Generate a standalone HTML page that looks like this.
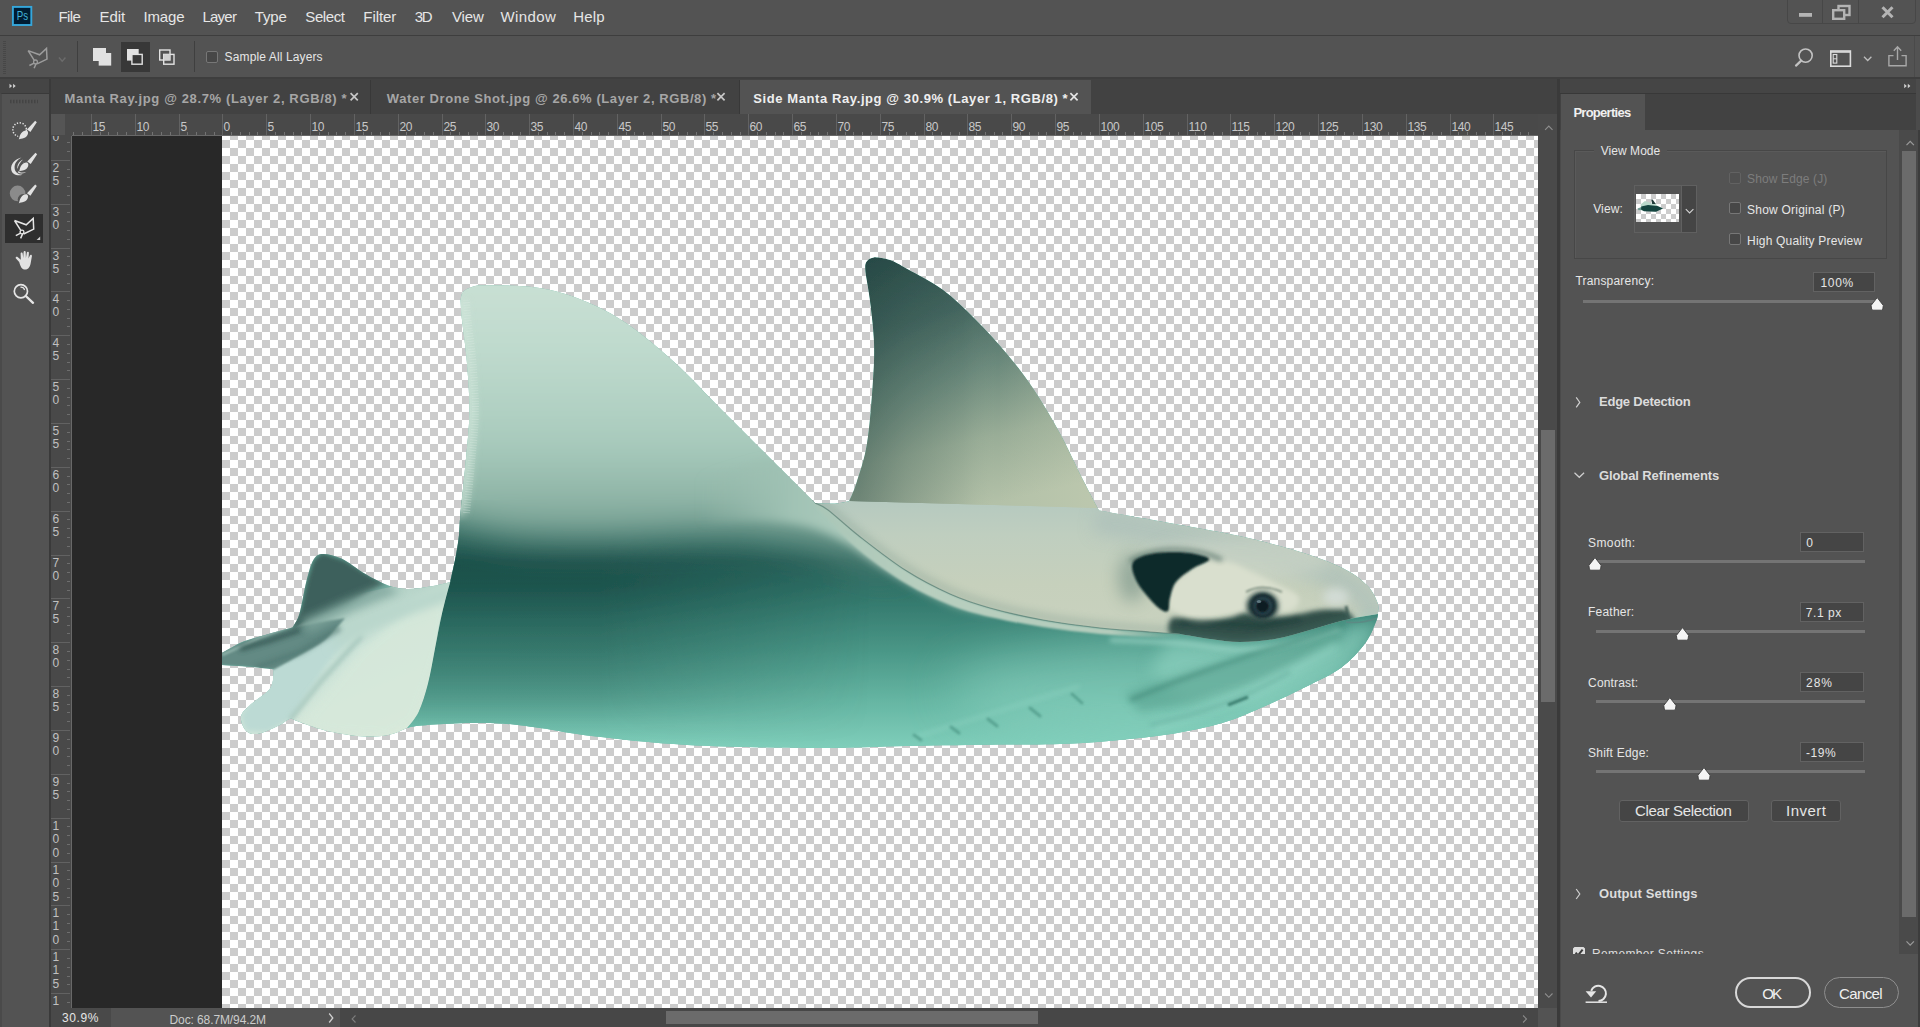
<!DOCTYPE html>
<html lang="en"><head><meta charset="utf-8"><title>Select and Mask - Side Manta Ray.jpg</title>
<style>
*{box-sizing:border-box;margin:0;padding:0}
html,body{width:1920px;height:1027px;overflow:hidden;background:#535353}
body{font-family:"Liberation Sans",sans-serif;position:relative;color:#ddd}
.a{position:absolute}
.t{position:absolute;white-space:nowrap;line-height:1}
#menubar{left:0;top:0;width:1920px;height:35px;background:#535353}
#mline{left:0;top:35px;width:1920px;height:1px;background:#3e3e3e}
#optbar{left:0;top:36px;width:1920px;height:41px;background:#535353}
#oline{left:0;top:77px;width:1920px;height:2px;background:#3e3e3e}
#ltop{left:0;top:79px;width:49px;height:14px;background:#454545}
#ltool{left:0;top:93px;width:49px;height:934px;background:#535353;border-top:1px solid #3a3a3a;border-left:2px solid #4a4a4a}
#ldiv{left:49px;top:79px;width:2px;height:948px;background:#3a3a3a}
#tabbar{left:51px;top:79px;width:1506px;height:35px;background:#424242}
.tab{position:absolute;top:80px;height:34px;border-right:1px solid #383838}
#tabA{left:740px;width:351px;background:#535353;top:80px;height:34px;position:absolute}
#hr{left:51px;top:114px;width:1487px;height:22px;background:#494949;overflow:hidden;border-bottom:1px solid #686868}
#hr i{position:absolute;bottom:1px;width:1px;background:#727272}
#hr i.t5{height:21px;background:#626262}
#hr i.t1{height:3px}
#hr b{position:absolute;top:7px;font-weight:normal;font-size:12px;line-height:12px;color:#c8c8c8;letter-spacing:-.45px}
#hrin{position:absolute;left:-51px;top:0;width:1920px;height:22px}
#corner{left:51px;top:114px;width:21px;height:22px;background:#494949}
#corner:before{content:"";position:absolute;left:0;top:0;width:14px;height:21px;background:#555}
#vr{left:51px;top:136px;width:21px;height:872px;background:#494949;overflow:hidden;border-right:1px solid #686868}
#vr i{position:absolute;right:1px;height:1px;background:#6e6e6e}
#vr i.v5{width:20px;background:#626262}
#vr i.v1{width:3px}
#vr b{position:absolute;left:1.5px;font-weight:normal;font-size:12px;line-height:13.3px;color:#c0c0c0}
#paste{left:72px;top:136px;width:150px;height:872px;background:#282828}
#canvas{left:222px;top:136px;width:1316px;height:872px;overflow:hidden;
 background-color:#fff;
 background-image:conic-gradient(#ccc 25%,#fff 0 50%,#ccc 0 75%,#fff 0);
 background-size:16px 16px;background-position:0 -4px}
#vs{left:1538px;top:114px;width:19px;height:894px;background:#4a4a4a}
#vst{left:1541px;top:430px;width:14px;height:272px;background:#6b6b6b}
#rdiv{left:1557px;top:79px;width:3px;height:948px;background:#3a3a3a}
#status{left:51px;top:1008px;width:1506px;height:19px;background:#474747}
#zoomb{left:51px;top:1008px;width:60px;height:19px;background:#494949}
#docb{left:111px;top:1008px;width:229px;height:19px;background:#535353}
#hst{left:666px;top:1011px;width:372px;height:13px;background:#6b6b6b}
#rtop{left:1560px;top:79px;width:360px;height:14px;background:#454545}
#rline{left:1560px;top:93px;width:360px;height:1px;background:#383838}
#rtabs{left:1560px;top:94px;width:360px;height:36px;background:#424242}
#rtab{left:1561px;top:94px;width:84px;height:36px;background:#535353}
#rbody{left:1560px;top:130px;width:360px;height:897px;background:#535353;border-left:1px solid #4a4a4a}
#redge{left:1918px;top:79px;width:2px;height:948px;background:#3c3c3c}
#psb{left:1899px;top:130px;width:19px;height:824px;background:#4a4a4a}
#psbt{left:1902px;top:151px;width:14px;height:766px;background:#6b6b6b}
.fs{position:absolute;left:1574px;top:150px;width:313px;height:109px;border:1px solid #474747;box-shadow:inset 1px 1px 0 #5a5a5a}
.fsl{position:absolute;left:1594px;top:144px;width:73px;height:14px;background:#535353}
.cb{position:absolute;width:12px;height:12px;border:1px solid #777;border-radius:2px;background:#474747}
.inp{position:absolute;height:20px;background:#454545;border:1px solid #626262}
.trk{position:absolute;height:3px;background:#747474}
.btn{position:absolute;height:22px;background:#454545;border:1px solid #626262;border-radius:3px}
.pill{position:absolute;height:31px;border-radius:16px}
svg{position:absolute;overflow:visible}
</style></head><body>
<div class="a" id="menubar"></div><div class="a" id="mline"></div>
<div class="a" id="optbar"></div><div class="a" id="oline"></div>
<div class="a" id="ltop"></div><div class="a" id="ltool"></div><div class="a" id="ldiv"></div>
<div class="a" id="tabbar"></div>
<div class="tab" style="left:51px;width:320px"></div>
<div class="tab" style="left:371px;width:369px"></div>
<div id="tabA"></div>
<div class="a" id="hr"><div id="hrin">
<i class="t1" style="left:73px"></i>
<i class="t1" style="left:82px"></i>
<i class="t5" style="left:91px"></i>
<b style="left:92.6px">15</b>
<i class="t1" style="left:100px"></i>
<i class="t1" style="left:108px"></i>
<i class="t1" style="left:117px"></i>
<i class="t1" style="left:126px"></i>
<i class="t5" style="left:135px"></i>
<b style="left:136.6px">10</b>
<i class="t1" style="left:144px"></i>
<i class="t1" style="left:152px"></i>
<i class="t1" style="left:161px"></i>
<i class="t1" style="left:170px"></i>
<i class="t5" style="left:179px"></i>
<b style="left:180.6px">5</b>
<i class="t1" style="left:187px"></i>
<i class="t1" style="left:196px"></i>
<i class="t1" style="left:205px"></i>
<i class="t1" style="left:214px"></i>
<i class="t5" style="left:222px"></i>
<b style="left:223.6px">0</b>
<i class="t1" style="left:231px"></i>
<i class="t1" style="left:240px"></i>
<i class="t1" style="left:249px"></i>
<i class="t1" style="left:257px"></i>
<i class="t5" style="left:266px"></i>
<b style="left:267.6px">5</b>
<i class="t1" style="left:275px"></i>
<i class="t1" style="left:284px"></i>
<i class="t1" style="left:293px"></i>
<i class="t1" style="left:301px"></i>
<i class="t5" style="left:310px"></i>
<b style="left:311.6px">10</b>
<i class="t1" style="left:319px"></i>
<i class="t1" style="left:328px"></i>
<i class="t1" style="left:336px"></i>
<i class="t1" style="left:345px"></i>
<i class="t5" style="left:354px"></i>
<b style="left:355.6px">15</b>
<i class="t1" style="left:363px"></i>
<i class="t1" style="left:371px"></i>
<i class="t1" style="left:380px"></i>
<i class="t1" style="left:389px"></i>
<i class="t5" style="left:398px"></i>
<b style="left:399.6px">20</b>
<i class="t1" style="left:406px"></i>
<i class="t1" style="left:415px"></i>
<i class="t1" style="left:424px"></i>
<i class="t1" style="left:433px"></i>
<i class="t5" style="left:442px"></i>
<b style="left:443.6px">25</b>
<i class="t1" style="left:450px"></i>
<i class="t1" style="left:459px"></i>
<i class="t1" style="left:468px"></i>
<i class="t1" style="left:477px"></i>
<i class="t5" style="left:485px"></i>
<b style="left:486.6px">30</b>
<i class="t1" style="left:494px"></i>
<i class="t1" style="left:503px"></i>
<i class="t1" style="left:512px"></i>
<i class="t1" style="left:520px"></i>
<i class="t5" style="left:529px"></i>
<b style="left:530.6px">35</b>
<i class="t1" style="left:538px"></i>
<i class="t1" style="left:547px"></i>
<i class="t1" style="left:555px"></i>
<i class="t1" style="left:564px"></i>
<i class="t5" style="left:573px"></i>
<b style="left:574.6px">40</b>
<i class="t1" style="left:582px"></i>
<i class="t1" style="left:591px"></i>
<i class="t1" style="left:599px"></i>
<i class="t1" style="left:608px"></i>
<i class="t5" style="left:617px"></i>
<b style="left:618.6px">45</b>
<i class="t1" style="left:626px"></i>
<i class="t1" style="left:634px"></i>
<i class="t1" style="left:643px"></i>
<i class="t1" style="left:652px"></i>
<i class="t5" style="left:661px"></i>
<b style="left:662.6px">50</b>
<i class="t1" style="left:669px"></i>
<i class="t1" style="left:678px"></i>
<i class="t1" style="left:687px"></i>
<i class="t1" style="left:696px"></i>
<i class="t5" style="left:704px"></i>
<b style="left:705.6px">55</b>
<i class="t1" style="left:713px"></i>
<i class="t1" style="left:722px"></i>
<i class="t1" style="left:731px"></i>
<i class="t1" style="left:740px"></i>
<i class="t5" style="left:748px"></i>
<b style="left:749.6px">60</b>
<i class="t1" style="left:757px"></i>
<i class="t1" style="left:766px"></i>
<i class="t1" style="left:775px"></i>
<i class="t1" style="left:783px"></i>
<i class="t5" style="left:792px"></i>
<b style="left:793.6px">65</b>
<i class="t1" style="left:801px"></i>
<i class="t1" style="left:810px"></i>
<i class="t1" style="left:818px"></i>
<i class="t1" style="left:827px"></i>
<i class="t5" style="left:836px"></i>
<b style="left:837.6px">70</b>
<i class="t1" style="left:845px"></i>
<i class="t1" style="left:853px"></i>
<i class="t1" style="left:862px"></i>
<i class="t1" style="left:871px"></i>
<i class="t5" style="left:880px"></i>
<b style="left:881.6px">75</b>
<i class="t1" style="left:889px"></i>
<i class="t1" style="left:897px"></i>
<i class="t1" style="left:906px"></i>
<i class="t1" style="left:915px"></i>
<i class="t5" style="left:924px"></i>
<b style="left:925.6px">80</b>
<i class="t1" style="left:932px"></i>
<i class="t1" style="left:941px"></i>
<i class="t1" style="left:950px"></i>
<i class="t1" style="left:959px"></i>
<i class="t5" style="left:967px"></i>
<b style="left:968.6px">85</b>
<i class="t1" style="left:976px"></i>
<i class="t1" style="left:985px"></i>
<i class="t1" style="left:994px"></i>
<i class="t1" style="left:1002px"></i>
<i class="t5" style="left:1011px"></i>
<b style="left:1012.6px">90</b>
<i class="t1" style="left:1020px"></i>
<i class="t1" style="left:1029px"></i>
<i class="t1" style="left:1038px"></i>
<i class="t1" style="left:1046px"></i>
<i class="t5" style="left:1055px"></i>
<b style="left:1056.6px">95</b>
<i class="t1" style="left:1064px"></i>
<i class="t1" style="left:1073px"></i>
<i class="t1" style="left:1081px"></i>
<i class="t1" style="left:1090px"></i>
<i class="t5" style="left:1099px"></i>
<b style="left:1100.6px">100</b>
<i class="t1" style="left:1108px"></i>
<i class="t1" style="left:1116px"></i>
<i class="t1" style="left:1125px"></i>
<i class="t1" style="left:1134px"></i>
<i class="t5" style="left:1143px"></i>
<b style="left:1144.6px">105</b>
<i class="t1" style="left:1151px"></i>
<i class="t1" style="left:1160px"></i>
<i class="t1" style="left:1169px"></i>
<i class="t1" style="left:1178px"></i>
<i class="t5" style="left:1187px"></i>
<b style="left:1188.6px">110</b>
<i class="t1" style="left:1195px"></i>
<i class="t1" style="left:1204px"></i>
<i class="t1" style="left:1213px"></i>
<i class="t1" style="left:1222px"></i>
<i class="t5" style="left:1230px"></i>
<b style="left:1231.6px">115</b>
<i class="t1" style="left:1239px"></i>
<i class="t1" style="left:1248px"></i>
<i class="t1" style="left:1257px"></i>
<i class="t1" style="left:1265px"></i>
<i class="t5" style="left:1274px"></i>
<b style="left:1275.6px">120</b>
<i class="t1" style="left:1283px"></i>
<i class="t1" style="left:1292px"></i>
<i class="t1" style="left:1300px"></i>
<i class="t1" style="left:1309px"></i>
<i class="t5" style="left:1318px"></i>
<b style="left:1319.6px">125</b>
<i class="t1" style="left:1327px"></i>
<i class="t1" style="left:1336px"></i>
<i class="t1" style="left:1344px"></i>
<i class="t1" style="left:1353px"></i>
<i class="t5" style="left:1362px"></i>
<b style="left:1363.6px">130</b>
<i class="t1" style="left:1371px"></i>
<i class="t1" style="left:1379px"></i>
<i class="t1" style="left:1388px"></i>
<i class="t1" style="left:1397px"></i>
<i class="t5" style="left:1406px"></i>
<b style="left:1407.6px">135</b>
<i class="t1" style="left:1414px"></i>
<i class="t1" style="left:1423px"></i>
<i class="t1" style="left:1432px"></i>
<i class="t1" style="left:1441px"></i>
<i class="t5" style="left:1450px"></i>
<b style="left:1451.6px">140</b>
<i class="t1" style="left:1458px"></i>
<i class="t1" style="left:1467px"></i>
<i class="t1" style="left:1476px"></i>
<i class="t1" style="left:1485px"></i>
<i class="t5" style="left:1493px"></i>
<b style="left:1494.6px">145</b>
<i class="t1" style="left:1502px"></i>
<i class="t1" style="left:1511px"></i>
<i class="t1" style="left:1520px"></i>
<i class="t1" style="left:1528px"></i>
</div></div>
<div class="a" id="corner"></div>
<div class="a" id="vr">
<b style="top:-62px">1<br>5</b>
<b style="top:-18px">2<br>0</b>
<i class="v1" style="top:6px"></i>
<i class="v1" style="top:15px"></i>
<i class="v5" style="top:24px"></i>
<b style="top:26px">2<br>5</b>
<i class="v1" style="top:33px"></i>
<i class="v1" style="top:41px"></i>
<i class="v1" style="top:50px"></i>
<i class="v1" style="top:59px"></i>
<i class="v5" style="top:68px"></i>
<b style="top:70px">3<br>0</b>
<i class="v1" style="top:76px"></i>
<i class="v1" style="top:85px"></i>
<i class="v1" style="top:94px"></i>
<i class="v1" style="top:103px"></i>
<i class="v5" style="top:112px"></i>
<b style="top:114px">3<br>5</b>
<i class="v1" style="top:120px"></i>
<i class="v1" style="top:129px"></i>
<i class="v1" style="top:138px"></i>
<i class="v1" style="top:147px"></i>
<i class="v5" style="top:155px"></i>
<b style="top:157px">4<br>0</b>
<i class="v1" style="top:164px"></i>
<i class="v1" style="top:173px"></i>
<i class="v1" style="top:182px"></i>
<i class="v1" style="top:190px"></i>
<i class="v5" style="top:199px"></i>
<b style="top:201px">4<br>5</b>
<i class="v1" style="top:208px"></i>
<i class="v1" style="top:217px"></i>
<i class="v1" style="top:226px"></i>
<i class="v1" style="top:234px"></i>
<i class="v5" style="top:243px"></i>
<b style="top:245px">5<br>0</b>
<i class="v1" style="top:252px"></i>
<i class="v1" style="top:261px"></i>
<i class="v1" style="top:269px"></i>
<i class="v1" style="top:278px"></i>
<i class="v5" style="top:287px"></i>
<b style="top:289px">5<br>5</b>
<i class="v1" style="top:296px"></i>
<i class="v1" style="top:305px"></i>
<i class="v1" style="top:313px"></i>
<i class="v1" style="top:322px"></i>
<i class="v5" style="top:331px"></i>
<b style="top:333px">6<br>0</b>
<i class="v1" style="top:340px"></i>
<i class="v1" style="top:348px"></i>
<i class="v1" style="top:357px"></i>
<i class="v1" style="top:366px"></i>
<i class="v5" style="top:375px"></i>
<b style="top:377px">6<br>5</b>
<i class="v1" style="top:383px"></i>
<i class="v1" style="top:392px"></i>
<i class="v1" style="top:401px"></i>
<i class="v1" style="top:410px"></i>
<i class="v5" style="top:419px"></i>
<b style="top:421px">7<br>0</b>
<i class="v1" style="top:427px"></i>
<i class="v1" style="top:436px"></i>
<i class="v1" style="top:445px"></i>
<i class="v1" style="top:454px"></i>
<i class="v5" style="top:462px"></i>
<b style="top:464px">7<br>5</b>
<i class="v1" style="top:471px"></i>
<i class="v1" style="top:480px"></i>
<i class="v1" style="top:489px"></i>
<i class="v1" style="top:497px"></i>
<i class="v5" style="top:506px"></i>
<b style="top:508px">8<br>0</b>
<i class="v1" style="top:515px"></i>
<i class="v1" style="top:524px"></i>
<i class="v1" style="top:533px"></i>
<i class="v1" style="top:541px"></i>
<i class="v5" style="top:550px"></i>
<b style="top:552px">8<br>5</b>
<i class="v1" style="top:559px"></i>
<i class="v1" style="top:568px"></i>
<i class="v1" style="top:576px"></i>
<i class="v1" style="top:585px"></i>
<i class="v5" style="top:594px"></i>
<b style="top:596px">9<br>0</b>
<i class="v1" style="top:603px"></i>
<i class="v1" style="top:612px"></i>
<i class="v1" style="top:620px"></i>
<i class="v1" style="top:629px"></i>
<i class="v5" style="top:638px"></i>
<b style="top:640px">9<br>5</b>
<i class="v1" style="top:647px"></i>
<i class="v1" style="top:655px"></i>
<i class="v1" style="top:664px"></i>
<i class="v1" style="top:673px"></i>
<i class="v5" style="top:682px"></i>
<b style="top:684px">1<br>0<br>0</b>
<i class="v1" style="top:690px"></i>
<i class="v1" style="top:699px"></i>
<i class="v1" style="top:708px"></i>
<i class="v1" style="top:717px"></i>
<i class="v5" style="top:726px"></i>
<b style="top:728px">1<br>0<br>5</b>
<i class="v1" style="top:734px"></i>
<i class="v1" style="top:743px"></i>
<i class="v1" style="top:752px"></i>
<i class="v1" style="top:761px"></i>
<i class="v5" style="top:769px"></i>
<b style="top:771px">1<br>1<br>0</b>
<i class="v1" style="top:778px"></i>
<i class="v1" style="top:787px"></i>
<i class="v1" style="top:796px"></i>
<i class="v1" style="top:805px"></i>
<i class="v5" style="top:813px"></i>
<b style="top:815px">1<br>1<br>5</b>
<i class="v1" style="top:822px"></i>
<i class="v1" style="top:831px"></i>
<i class="v1" style="top:840px"></i>
<i class="v1" style="top:848px"></i>
<i class="v5" style="top:857px"></i>
<b style="top:859px">1<br>2<br>0</b>
<i class="v1" style="top:866px"></i>
</div>
<div class="a" id="paste"></div>
<div class="a" id="canvas">
<svg style="left:-222px;top:-136px" width="1920" height="1027" viewBox="0 0 1920 1027">
<defs>
<clipPath id="cs"><path d="M460.5,300.0C460.9,298.7 461.1,294.2 463.0,292.0C464.9,289.8 468.2,288.1 472.0,287.0C475.8,285.9 475.7,285.2 486.0,285.3C496.3,285.4 518.8,285.2 534.0,287.3C549.2,289.4 562.2,292.4 577.0,298.0C591.8,303.6 606.5,310.3 622.5,320.8C638.5,331.3 656.1,345.8 673.0,361.0C689.9,376.2 706.9,395.1 723.8,412.0C740.7,428.9 759.2,447.3 774.4,462.5C789.6,477.7 808.2,496.2 815.0,503.0C818.3,503.1 829.3,503.8 835.0,503.5C840.7,503.2 846.8,501.4 849.2,501.0C850.4,497.9 853.6,492.1 856.5,482.7C859.4,473.3 864.1,460.8 866.8,444.7C869.5,428.6 871.4,403.3 872.6,386.2C873.8,369.1 874.5,356.9 874.0,342.3C873.5,327.7 871.2,310.7 869.7,298.5C868.2,286.3 865.6,275.6 865.3,269.2C865.0,262.8 866.3,262.0 868.0,260.0C869.7,258.0 874.2,257.7 875.5,257.2C877.9,257.7 884.6,258.0 890.0,260.0C895.4,262.0 898.9,264.2 907.7,269.2C916.5,274.1 931.6,281.4 942.8,289.7C954.0,298.0 964.3,308.3 975.0,319.0C985.7,329.7 997.2,342.3 1007.0,354.0C1016.8,365.7 1024.7,375.8 1033.5,389.0C1042.3,402.2 1051.5,417.9 1059.8,433.0C1068.0,448.1 1076.5,466.9 1083.0,479.8C1089.5,492.7 1096.3,505.4 1099.0,510.5C1106.1,511.8 1125.6,515.1 1141.8,518.0C1158.0,520.9 1178.1,524.3 1196.3,527.7C1214.5,531.1 1232.6,534.3 1250.8,538.6C1269.0,542.9 1289.5,548.4 1305.4,553.6C1321.3,558.8 1335.9,564.5 1346.3,570.0C1356.7,575.5 1362.8,580.8 1368.0,586.3C1373.2,591.8 1375.9,598.2 1377.6,602.7C1379.3,607.2 1377.9,611.8 1378.0,613.6C1377.7,615.0 1378.2,616.8 1376.0,621.8C1373.8,626.8 1370.9,635.9 1365.0,643.6C1359.1,651.3 1350.7,660.8 1340.8,668.0C1330.9,675.2 1318.1,680.6 1305.4,687.0C1292.7,693.4 1278.1,700.4 1264.5,706.3C1250.9,712.2 1238.6,718.1 1223.6,722.6C1208.6,727.1 1192.7,730.5 1174.5,733.5C1156.3,736.5 1133.6,738.6 1114.5,740.4C1095.4,742.1 1079.1,743.3 1060.0,744.0C1040.9,744.7 1025.7,744.2 1000.0,744.5C974.3,744.8 937.2,745.4 906.0,746.0C874.8,746.6 848.9,748.2 812.5,748.0C776.1,747.8 724.0,747.0 687.5,745.0C651.0,743.0 618.4,739.1 593.8,736.3C569.2,733.5 555.5,730.1 540.0,728.0C524.5,725.9 514.9,724.3 500.5,723.5C486.1,722.7 467.4,723.0 453.8,723.4C440.2,723.8 426.5,724.9 418.7,725.7C410.9,726.5 408.9,727.6 407.0,728.0C403.9,729.2 396.1,733.6 388.3,735.0C380.5,736.4 370.8,737.0 360.3,736.2C349.8,735.4 335.8,732.9 325.2,730.4C314.6,727.9 302.9,723.0 297.0,721.0C291.1,719.0 293.1,717.9 290.0,718.7C286.9,719.5 283.8,723.2 278.4,725.7C273.0,728.2 262.8,733.1 257.4,733.9C251.9,734.7 248.4,733.3 245.7,730.4C243.0,727.5 240.2,720.7 241.0,716.4C241.8,712.1 245.5,709.4 250.4,704.7C255.3,700.0 266.4,694.1 270.3,688.3C274.2,682.4 273.2,672.7 273.8,669.6C270.7,669.2 263.6,668.1 255.0,667.3C246.4,666.5 227.5,665.4 222.0,665.0L222,653C225.6,651.1 235.9,644.7 243.4,641.6C250.9,638.5 258.6,636.9 266.8,634.5C275.0,632.1 288.2,628.7 292.5,627.5C293.7,625.2 297.2,621.3 299.5,613.5C301.8,605.7 304.2,589.8 306.5,580.8C308.8,571.8 310.8,564.2 313.5,559.7C316.2,555.2 318.2,554.1 322.9,553.9C327.6,553.7 334.6,555.3 341.6,558.6C348.6,561.9 357.2,569.3 365.0,573.8C372.8,578.3 381.3,583.0 388.3,585.5C395.3,588.0 400.0,588.8 407.0,589.0C414.0,589.2 423.2,587.8 430.4,586.6C437.6,585.4 446.9,582.8 450.2,582.0C451.2,577.5 454.5,562.8 456.0,555.0C457.5,547.2 458.2,542.0 459.0,535.0C459.8,528.0 459.4,525.1 460.5,513.0C461.6,500.9 464.1,479.3 465.6,462.5C467.1,445.7 469.2,428.9 469.4,412.0C469.6,395.1 468.0,376.3 466.8,361.0C465.6,345.7 463.1,330.2 462.0,320.0C460.9,309.8 460.8,303.3 460.5,300.0Z"/></clipPath>
<clipPath id="cw"><path d="M400,250 L815,250L815,503C817.2,504.2 820.7,504.5 828.0,510.0C835.3,515.5 846.0,525.9 859.0,536.0C872.0,546.1 890.8,560.9 906.0,570.6C921.2,580.3 936.0,587.8 950.0,594.0C964.0,600.2 974.5,603.7 990.0,608.0C1005.5,612.3 1024.7,616.7 1043.0,620.0C1061.3,623.3 1082.2,626.0 1100.0,628.0C1117.8,630.0 1136.7,631.0 1150.0,632.0C1163.3,633.0 1175.0,633.7 1180.0,634.0L1180,800 L400,800Z"/></clipPath>
<clipPath id="cu"><path d="M815,503C818.3,503.1 829.3,503.8 835.0,503.5C840.7,503.2 846.8,501.4 849.2,501.0L1099,508C1106.1,511.8 1125.6,515.1 1141.8,518.0C1158.0,520.9 1178.1,524.3 1196.3,527.7C1214.5,531.1 1232.6,534.3 1250.8,538.6C1269.0,542.9 1289.5,548.4 1305.4,553.6C1321.3,558.8 1335.9,564.5 1346.3,570.0C1356.7,575.5 1362.8,580.8 1368.0,586.3C1373.2,591.8 1375.9,598.2 1377.6,602.7C1379.3,607.2 1377.9,611.8 1378.0,613.6L1390,612C1382.5,613.3 1358.3,617.0 1345.0,620.0C1331.7,623.0 1321.7,626.8 1310.0,630.0C1298.3,633.2 1286.7,637.0 1275.0,639.0C1263.3,641.0 1250.8,642.0 1240.0,642.0C1229.2,642.0 1220.0,640.3 1210.0,639.0C1200.0,637.7 1185.0,634.8 1180.0,634.0C1175.0,633.7 1163.3,633.0 1150.0,632.0C1136.7,631.0 1117.8,630.0 1100.0,628.0C1082.2,626.0 1061.3,623.3 1043.0,620.0C1024.7,616.7 1005.5,612.3 990.0,608.0C974.5,603.7 964.0,600.2 950.0,594.0C936.0,587.8 921.2,580.3 906.0,570.6C890.8,560.9 872.0,546.1 859.0,536.0C846.0,525.9 835.3,515.5 828.0,510.0C820.7,504.5 817.2,504.2 815.0,503.0Z"/></clipPath>
<clipPath id="cl"><path d="M440,500 L815,500 L815,503C817.2,504.2 820.7,504.5 828.0,510.0C835.3,515.5 846.0,525.9 859.0,536.0C872.0,546.1 890.8,560.9 906.0,570.6C921.2,580.3 936.0,587.8 950.0,594.0C964.0,600.2 974.5,603.7 990.0,608.0C1005.5,612.3 1024.7,616.7 1043.0,620.0C1061.3,623.3 1082.2,626.0 1100.0,628.0C1117.8,630.0 1136.7,631.0 1150.0,632.0C1163.3,633.0 1175.0,633.7 1180.0,634.0C1185.0,634.8 1200.0,637.7 1210.0,639.0C1220.0,640.3 1229.2,642.0 1240.0,642.0C1250.8,642.0 1263.3,641.0 1275.0,639.0C1286.7,637.0 1298.3,633.2 1310.0,630.0C1321.7,626.8 1331.7,623.0 1345.0,620.0C1358.3,617.0 1382.5,613.3 1390.0,612.0L1390,760 L400,760C401.2,754.7 405.8,733.3 407.0,728.0C408.9,725.3 415.2,719.1 418.7,711.7C422.2,704.3 425.3,694.1 428.0,683.6C430.7,673.1 432.7,660.3 435.0,648.6C437.3,636.9 439.5,624.6 442.0,613.5C444.5,602.4 448.8,587.2 450.2,582.0L440,500Z"/></clipPath>
<filter id="b1" x="-100%" y="-100%" width="300%" height="300%"><feGaussianBlur stdDeviation="1.2"/></filter>
<filter id="b2" x="-100%" y="-100%" width="300%" height="300%"><feGaussianBlur stdDeviation="2.5"/></filter>
<filter id="b4" x="-100%" y="-100%" width="300%" height="300%"><feGaussianBlur stdDeviation="4"/></filter>
<filter id="b5" x="-100%" y="-100%" width="300%" height="300%"><feGaussianBlur stdDeviation="5"/></filter>
<filter id="b8" x="-100%" y="-100%" width="300%" height="300%"><feGaussianBlur stdDeviation="8"/></filter>
<filter id="b14" x="-100%" y="-100%" width="300%" height="300%"><feGaussianBlur stdDeviation="14"/></filter>
<filter id="b18" x="-100%" y="-100%" width="300%" height="300%"><feGaussianBlur stdDeviation="17"/></filter>
<filter id="b25" x="-100%" y="-100%" width="300%" height="300%"><feGaussianBlur stdDeviation="25"/></filter>
<filter id="edge" x="-5%" y="-5%" width="110%" height="110%"><feGaussianBlur stdDeviation="0.7"/></filter>
<linearGradient id="gfin" gradientUnits="userSpaceOnUse" x1="885" y1="258" x2="945" y2="515">
 <stop offset="0" stop-color="#2f524e"/><stop offset=".25" stop-color="#466861"/><stop offset=".5" stop-color="#6d8b7d"/><stop offset=".75" stop-color="#99ad97"/><stop offset="1" stop-color="#b3c1a8"/></linearGradient>
<linearGradient id="gfin2" gradientUnits="userSpaceOnUse" x1="860" y1="400" x2="1090" y2="400">
 <stop offset="0" stop-color="#1c3d3a" stop-opacity=".4"/><stop offset=".2" stop-color="#1c3d3a" stop-opacity=".22"/><stop offset=".45" stop-color="#1c3d3a" stop-opacity=".06"/><stop offset=".6" stop-color="#d8dcc0" stop-opacity="0"/><stop offset="1" stop-color="#d8dcc0" stop-opacity=".22"/></linearGradient>
<linearGradient id="glow" gradientUnits="userSpaceOnUse" x1="0" y1="530" x2="0" y2="750">
 <stop offset="0" stop-color="#2f6a60"/><stop offset=".14" stop-color="#28625a"/><stop offset=".32" stop-color="#34796d"/><stop offset=".55" stop-color="#4a9787"/><stop offset=".78" stop-color="#66b6a3"/><stop offset="1" stop-color="#80cfbb"/></linearGradient>
<linearGradient id="gwing" gradientUnits="userSpaceOnUse" x1="0" y1="285" x2="0" y2="560">
 <stop offset="0" stop-color="#c9e0d4"/><stop offset=".27" stop-color="#bdd9cc"/><stop offset=".57" stop-color="#a9cbbd"/><stop offset=".75" stop-color="#93b8aa"/><stop offset=".87" stop-color="#7ea699"/><stop offset="1" stop-color="#6a9488"/></linearGradient>
<linearGradient id="grim" gradientUnits="userSpaceOnUse" x1="815" y1="0" x2="1185" y2="0"><stop offset="0" stop-color="#a9c6b7"/><stop offset=".3" stop-color="#b8cfbf"/><stop offset=".8" stop-color="#b4ccbc"/><stop offset="1" stop-color="#b4ccbc" stop-opacity="0"/></linearGradient>
<linearGradient id="gdkv" gradientUnits="userSpaceOnUse" x1="0" y1="520" x2="0" y2="760">
 <stop offset="0" stop-color="#0e3a37" stop-opacity=".1"/><stop offset=".1" stop-color="#0e3a37" stop-opacity=".25"/><stop offset=".18" stop-color="#0e3a37" stop-opacity=".45"/><stop offset=".27" stop-color="#0e3a37" stop-opacity=".52"/><stop offset=".42" stop-color="#0e3a37" stop-opacity=".38"/><stop offset=".65" stop-color="#0e3a37" stop-opacity=".27"/><stop offset=".75" stop-color="#0e3a37" stop-opacity=".2"/><stop offset=".85" stop-color="#0e3a37" stop-opacity=".07"/><stop offset=".93" stop-color="#0e3a37" stop-opacity="0"/></linearGradient>
<linearGradient id="gmx" gradientUnits="userSpaceOnUse" x1="600" y1="0" x2="870" y2="0"><stop offset="0" stop-color="#fff"/><stop offset="1" stop-color="#000"/></linearGradient>
<mask id="mdk" maskUnits="userSpaceOnUse" x="400" y="500" width="540" height="280"><rect x="400" y="500" width="540" height="280" fill="url(#gmx)"/></mask>
<linearGradient id="glit2" gradientUnits="userSpaceOnUse" x1="700" y1="0" x2="1000" y2="0"><stop offset="0" stop-color="#98bbad" stop-opacity="0"/><stop offset=".3" stop-color="#a0c2b4"/><stop offset=".6" stop-color="#b2cfc1"/><stop offset="1" stop-color="#b6d0c0"/></linearGradient>
<linearGradient id="gdk" gradientUnits="userSpaceOnUse" x1="440" y1="0" x2="880" y2="0"><stop offset="0" stop-color="#0f3f3a"/><stop offset=".45" stop-color="#0f3f3a"/><stop offset="1" stop-color="#0f3f3a" stop-opacity="0"/></linearGradient>
<linearGradient id="gup" gradientUnits="userSpaceOnUse" x1="0" y1="500" x2="0" y2="640">
 <stop offset="0" stop-color="#b5c9bf"/><stop offset=".25" stop-color="#bfcebf"/><stop offset=".6" stop-color="#c6d0bc"/><stop offset="1" stop-color="#c9d2bf"/></linearGradient>
<linearGradient id="gpel" gradientUnits="userSpaceOnUse" x1="320" y1="600" x2="380" y2="740">
 <stop offset="0" stop-color="#a8c9be"/><stop offset=".4" stop-color="#cbe3d8"/><stop offset="1" stop-color="#dcebdc"/></linearGradient>
</defs>
<g id="rayg" filter="url(#edge)"><g clip-path="url(#cs)">
 <rect x="215" y="250" width="1180" height="500" fill="#6db5a5"/>
 <path d="M849.2,501.0C850.4,497.9 853.6,492.1 856.5,482.7C859.4,473.3 864.1,460.8 866.8,444.7C869.5,428.6 871.4,403.3 872.6,386.2C873.8,369.1 874.5,356.9 874.0,342.3C873.5,327.7 871.2,310.7 869.7,298.5C868.2,286.3 865.6,275.6 865.3,269.2C865.0,262.8 866.3,262.0 868.0,260.0C869.7,258.0 874.2,257.7 875.5,257.2C877.9,257.7 884.6,258.0 890.0,260.0C895.4,262.0 898.9,264.2 907.7,269.2C916.5,274.1 931.6,281.4 942.8,289.7C954.0,298.0 964.3,308.3 975.0,319.0C985.7,329.7 997.2,342.3 1007.0,354.0C1016.8,365.7 1024.7,375.8 1033.5,389.0C1042.3,402.2 1051.5,417.9 1059.8,433.0C1068.0,448.1 1076.5,466.9 1083.0,479.8C1089.5,492.7 1096.3,505.4 1099.0,510.5L1099,530 L849,530Z" fill="url(#gfin)"/>
 <path d="M849.2,501.0C850.4,497.9 853.6,492.1 856.5,482.7C859.4,473.3 864.1,460.8 866.8,444.7C869.5,428.6 871.4,403.3 872.6,386.2C873.8,369.1 874.5,356.9 874.0,342.3C873.5,327.7 871.2,310.7 869.7,298.5C868.2,286.3 865.6,275.6 865.3,269.2C865.0,262.8 866.3,262.0 868.0,260.0C869.7,258.0 874.2,257.7 875.5,257.2C877.9,257.7 884.6,258.0 890.0,260.0C895.4,262.0 898.9,264.2 907.7,269.2C916.5,274.1 931.6,281.4 942.8,289.7C954.0,298.0 964.3,308.3 975.0,319.0C985.7,329.7 997.2,342.3 1007.0,354.0C1016.8,365.7 1024.7,375.8 1033.5,389.0C1042.3,402.2 1051.5,417.9 1059.8,433.0C1068.0,448.1 1076.5,466.9 1083.0,479.8C1089.5,492.7 1096.3,505.4 1099.0,510.5L1099,530 L849,530Z" fill="url(#gfin2)"/>
 <path d="M460,575C457.0,581.4 446.2,601.2 442.0,613.5C437.8,625.8 437.3,636.9 435.0,648.6C432.7,660.3 430.7,673.1 428.0,683.6C425.3,694.1 422.2,704.3 418.7,711.7C415.2,719.1 408.9,725.3 407.0,728.0C403.9,729.2 396.1,733.6 388.3,735.0C380.5,736.4 370.8,737.0 360.3,736.2C349.8,735.4 335.8,732.9 325.2,730.4C314.6,727.9 302.9,723.0 297.0,721.0C291.1,719.0 293.1,717.9 290.0,718.7C286.9,719.5 283.8,723.2 278.4,725.7C273.0,728.2 262.8,733.1 257.4,733.9C251.9,734.7 248.4,733.3 245.7,730.4C243.0,727.5 240.2,720.7 241.0,716.4C241.8,712.1 245.5,709.4 250.4,704.7C255.3,700.0 266.4,694.1 270.3,688.3C274.2,682.4 273.2,672.7 273.8,669.6L280,640 L330,600 L400,585Z" fill="url(#gpel)"/>
 <path d="M273,668 L241,716 L246,731 L268,732 L290,720 L330,660 L360,625 L300,640Z" fill="#bcdad4" filter="url(#b2)"/>
 <path d="M290,720 L322,680 L362,636" stroke="#9dc0b6" stroke-width="3.5" fill="none" filter="url(#b2)"/>
 <path d="M300,725 L360,650 L420,600 L452,584 L440,650 L415,722 L390,736 L330,733Z" fill="#d6e8da" opacity=".85" filter="url(#b4)"/>
 <path d="M340,625 L450,583 L452,600 L380,625 L330,650Z" fill="#bad7cc" filter="url(#b4)"/>
 <path d="M273.8,669.6C270.7,669.2 263.6,668.1 255.0,667.3C246.4,666.5 227.5,665.4 222.0,665.0L215,653C225.6,651.1 235.9,644.7 243.4,641.6C250.9,638.5 258.6,636.9 266.8,634.5C275.0,632.1 288.2,628.7 292.5,627.5C297.1,626.6 311.2,623.6 320.0,622.0C328.8,620.4 340.8,618.7 345.0,618.0C341.7,621.7 332.5,633.8 325.0,640.0C317.5,646.2 308.5,650.1 300.0,655.0C291.5,659.9 278.2,667.2 273.8,669.6Z" fill="#638a84" filter="url(#b1)"/>
 <path d="M222,655 L262,637 L300,622" stroke="#8db0a8" stroke-width="3" fill="none" filter="url(#b1)"/>
 <path d="M240,649 L268,641 L300,630" stroke="#2f4f4c" stroke-width="4.5" fill="none" opacity=".8" filter="url(#b2)"/>
 <path d="M255,668 L300,652 L340,628" stroke="#4f7670" stroke-width="5" fill="none" opacity=".7" filter="url(#b2)"/>
 <path d="M321.8,552 L345,560 L368,574 L386,584 L345,606 L296,628 L290,628 L300,610 L306.5,580 L313,560Z" fill="#3c605b" filter="url(#b2)"/>
 <path d="M300,620 L345,600 L385,584 L400,592 L350,612 L310,632Z" fill="#7fa59c" opacity=".8" filter="url(#b4)"/>
 <g clip-path="url(#cl)">
  <path d="M440,500 L815,500 L815,503C817.2,504.2 820.7,504.5 828.0,510.0C835.3,515.5 846.0,525.9 859.0,536.0C872.0,546.1 890.8,560.9 906.0,570.6C921.2,580.3 936.0,587.8 950.0,594.0C964.0,600.2 974.5,603.7 990.0,608.0C1005.5,612.3 1024.7,616.7 1043.0,620.0C1061.3,623.3 1082.2,626.0 1100.0,628.0C1117.8,630.0 1136.7,631.0 1150.0,632.0C1163.3,633.0 1175.0,633.7 1180.0,634.0C1185.0,634.8 1200.0,637.7 1210.0,639.0C1220.0,640.3 1229.2,642.0 1240.0,642.0C1250.8,642.0 1263.3,641.0 1275.0,639.0C1286.7,637.0 1298.3,633.2 1310.0,630.0C1321.7,626.8 1331.7,623.0 1345.0,620.0C1358.3,617.0 1382.5,613.3 1390.0,612.0L1390,760 L400,760C401.2,754.7 405.8,733.3 407.0,728.0C408.9,725.3 415.2,719.1 418.7,711.7C422.2,704.3 425.3,694.1 428.0,683.6C430.7,673.1 432.7,660.3 435.0,648.6C437.3,636.9 439.5,624.6 442.0,613.5C444.5,602.4 448.8,587.2 450.2,582.0L440,500Z" fill="url(#glow)"/>
  <ellipse cx="1180" cy="690" rx="230" ry="55" fill="#9be0ce" opacity=".4" filter="url(#b25)"/>
  <rect x="400" y="520" width="520" height="240" fill="url(#gdkv)" mask="url(#mdk)"/>
 </g>
 <g clip-path="url(#cw)"><path d="M400,250 L850,250 L850,520C853.3,523.3 860.7,532.3 870.0,540.0C879.3,547.7 900.0,561.7 906.0,566.0C901.7,565.8 889.3,566.7 880.0,565.0C870.7,563.3 860.8,559.3 850.0,556.0C839.2,552.7 826.7,547.7 815.0,545.0C803.3,542.3 792.5,541.7 780.0,540.0C767.5,538.3 756.7,535.7 740.0,535.0C723.3,534.3 703.3,535.2 680.0,536.0C656.7,536.8 626.7,539.7 600.0,540.0C573.3,540.3 541.7,540.0 520.0,538.0C498.3,536.0 483.3,531.0 470.0,528.0C456.7,525.0 445.0,521.3 440.0,520.0L400,512Z" fill="url(#gwing)" filter="url(#b18)"/>
  <path d="M455,300 L466,300 L476,412 L471,480 L464,515 L452,515Z" fill="#d0e6da" opacity=".7" filter="url(#b4)"/>
  <path d="M700,478 L760,462 L850,455 L850,520C851.5,522.7 849.7,527.6 859.0,536.0C868.3,544.4 890.8,560.9 906.0,570.6C921.2,580.3 934.3,587.3 950.0,594.0C965.7,600.7 991.7,608.2 1000.0,611.0C992.2,614.8 967.3,609.2 953.0,604.0C938.7,598.8 927.0,592.8 914.0,586.0C901.0,579.2 886.3,570.2 875.0,563.0C863.7,555.8 857.3,549.2 846.0,543.0C834.7,536.8 821.7,529.8 807.0,526.0C792.3,522.2 775.8,520.3 758.0,520.0C740.2,519.7 709.7,523.3 700.0,524.0Z" fill="url(#glit2)" filter="url(#b5)"/>
  <path d="M466.5,513.0C467.4,504.6 470.1,479.3 471.6,462.5C473.1,445.7 475.2,428.9 475.4,412.0C475.6,395.1 474.0,376.3 472.8,361.0C471.6,345.7 469.1,330.2 468.0,320.0C466.9,309.8 466.8,303.3 466.5,300.0" stroke="#e0efe6" stroke-width="7" stroke-dasharray="0.9 1.7" fill="none" opacity=".35"/>
  <path d="M815.0,503.0C817.2,504.2 820.7,504.5 828.0,510.0C835.3,515.5 846.0,525.9 859.0,536.0C872.0,546.1 890.8,560.9 906.0,570.6C921.2,580.3 936.0,587.8 950.0,594.0C964.0,600.2 974.5,603.7 990.0,608.0C1005.5,612.3 1024.7,616.7 1043.0,620.0C1061.3,623.3 1082.2,626.0 1100.0,628.0C1117.8,630.0 1136.7,631.0 1150.0,632.0C1163.3,633.0 1175.0,633.7 1180.0,634.0L1180,638C1175.0,637.8 1163.3,637.7 1150.0,637.0C1136.7,636.3 1117.8,635.7 1100.0,634.0C1082.2,632.3 1061.3,629.8 1043.0,627.0C1024.7,624.2 1005.5,620.7 990.0,617.0C974.5,613.3 964.0,610.6 950.0,605.0C936.0,599.4 921.2,592.8 906.0,583.6C890.8,574.4 872.0,560.8 859.0,550.0C846.0,539.2 835.3,526.3 828.0,519.0C820.7,511.7 817.2,508.2 815.0,506.0Z" fill="url(#grim)" filter="url(#b1)"/>
 </g>
 <g clip-path="url(#cu)">
  <path d="M815,503C818.3,503.1 829.3,503.8 835.0,503.5C840.7,503.2 846.8,501.4 849.2,501.0L1099,508C1106.1,511.8 1125.6,515.1 1141.8,518.0C1158.0,520.9 1178.1,524.3 1196.3,527.7C1214.5,531.1 1232.6,534.3 1250.8,538.6C1269.0,542.9 1289.5,548.4 1305.4,553.6C1321.3,558.8 1335.9,564.5 1346.3,570.0C1356.7,575.5 1362.8,580.8 1368.0,586.3C1373.2,591.8 1375.9,598.2 1377.6,602.7C1379.3,607.2 1377.9,611.8 1378.0,613.6L1390,612C1382.5,613.3 1358.3,617.0 1345.0,620.0C1331.7,623.0 1321.7,626.8 1310.0,630.0C1298.3,633.2 1286.7,637.0 1275.0,639.0C1263.3,641.0 1250.8,642.0 1240.0,642.0C1229.2,642.0 1220.0,640.3 1210.0,639.0C1200.0,637.7 1185.0,634.8 1180.0,634.0C1175.0,633.7 1163.3,633.0 1150.0,632.0C1136.7,631.0 1117.8,630.0 1100.0,628.0C1082.2,626.0 1061.3,623.3 1043.0,620.0C1024.7,616.7 1005.5,612.3 990.0,608.0C974.5,603.7 964.0,600.2 950.0,594.0C936.0,587.8 921.2,580.3 906.0,570.6C890.8,560.9 872.0,546.1 859.0,536.0C846.0,525.9 835.3,515.5 828.0,510.0C820.7,504.5 817.2,504.2 815.0,503.0Z" fill="url(#gup)"/>
  <path d="M815.0,500.0C817.2,501.2 820.7,501.5 828.0,507.0C835.3,512.5 846.0,522.9 859.0,533.0C872.0,543.1 890.8,557.9 906.0,567.6C921.2,577.3 936.0,584.8 950.0,591.0C964.0,597.2 974.5,600.7 990.0,605.0C1005.5,609.3 1024.7,613.7 1043.0,617.0C1061.3,620.3 1082.2,623.0 1100.0,625.0C1117.8,627.0 1136.7,628.0 1150.0,629.0C1163.3,630.0 1175.0,630.7 1180.0,631.0" stroke="#7d9a8e" stroke-width="5" fill="none" opacity=".55" filter="url(#b4)"/>
  <path d="M1095.0,520.5C1102.1,521.8 1121.6,525.1 1137.8,528.0C1154.0,530.9 1174.1,534.3 1192.3,537.7C1210.5,541.1 1228.6,544.3 1246.8,548.6C1265.0,552.9 1285.5,558.4 1301.4,563.6C1317.3,568.8 1331.9,574.5 1342.3,580.0C1352.7,585.5 1358.8,590.8 1364.0,596.3C1369.2,601.8 1371.9,608.2 1373.6,612.7C1375.3,617.2 1373.9,621.8 1374.0,623.6" stroke="#adc0ba" stroke-width="26" fill="none" opacity=".75" filter="url(#b8)"/>
  <ellipse cx="1240" cy="560" rx="90" ry="22" fill="#cdd6c8" opacity=".6" filter="url(#b8)"/>
  <path d="M1168.0,606.0C1166.5,601.7 1168.0,593.5 1171.0,588.0C1174.0,582.5 1180.0,577.3 1186.0,573.0C1192.0,568.7 1199.3,563.7 1207.0,562.0C1214.7,560.3 1224.5,561.3 1232.0,563.0C1239.5,564.7 1244.8,568.7 1252.0,572.0C1259.2,575.3 1267.3,579.0 1275.0,583.0C1282.7,587.0 1295.2,591.5 1298.0,596.0C1300.8,600.5 1298.0,607.0 1292.0,610.0C1286.0,613.0 1272.3,613.2 1262.0,614.0C1251.7,614.8 1240.3,614.2 1230.0,615.0C1219.7,615.8 1208.3,619.2 1200.0,619.0C1191.7,618.8 1185.3,616.2 1180.0,614.0C1174.7,611.8 1169.5,610.3 1168.0,606.0Z" fill="#d9dfce" filter="url(#b2)"/>
  <ellipse cx="1132" cy="578" rx="14" ry="24" fill="#6f8c82" opacity=".55" filter="url(#b8)"/>
  <path d="M1130,562 C1150,546 1195,546 1222,560" stroke="#4d6a62" stroke-width="5" fill="none" opacity=".6" filter="url(#b2)"/>
  <path d="M1132.0,566.0C1132.2,562.0 1134.2,560.2 1138.0,558.0C1141.8,555.8 1148.0,554.0 1155.0,553.0C1162.0,552.0 1172.5,551.7 1180.0,552.0C1187.5,552.3 1195.2,553.7 1200.0,555.0C1204.8,556.3 1210.3,557.7 1209.0,560.0C1207.7,562.3 1197.5,565.3 1192.0,569.0C1186.5,572.7 1179.7,577.2 1176.0,582.0C1172.3,586.8 1171.3,593.2 1170.0,598.0C1168.7,602.8 1169.7,609.2 1168.0,611.0C1166.3,612.8 1163.3,611.3 1160.0,609.0C1156.7,606.7 1151.8,601.5 1148.0,597.0C1144.2,592.5 1139.7,587.2 1137.0,582.0C1134.3,576.8 1131.8,570.0 1132.0,566.0Z" fill="#0f2c2b" filter="url(#b1)"/>
  <path d="M1172.0,618.0C1176.0,615.0 1190.5,622.0 1200.0,622.0C1209.5,622.0 1221.5,619.5 1229.0,618.0C1236.5,616.5 1239.5,613.2 1245.0,613.0C1250.5,612.8 1254.5,616.5 1262.0,617.0C1269.5,617.5 1281.5,617.0 1290.0,616.0C1298.5,615.0 1305.5,612.2 1313.0,611.0C1320.5,609.8 1329.3,609.0 1335.0,609.0C1340.7,609.0 1344.2,608.3 1347.0,611.0C1349.8,613.7 1359.8,620.2 1352.0,625.0C1344.2,629.8 1318.7,635.8 1300.0,640.0C1281.3,644.2 1260.7,650.0 1240.0,650.0C1219.3,650.0 1187.3,645.3 1176.0,640.0C1164.7,634.7 1168.0,621.0 1172.0,618.0Z" fill="#33504a" filter="url(#b2)"/>
  <path d="M1180,622 L1230,624 L1262,626 L1300,618" stroke="#1f3a37" stroke-width="6" fill="none" opacity=".55" filter="url(#b2)"/>
  <ellipse cx="1262.5" cy="606" rx="16" ry="14.5" fill="#2a4543" filter="url(#b2)"/>
  <ellipse cx="1262.8" cy="605.8" rx="12.5" ry="12" fill="#1b2e34" filter="url(#b1)"/>
  <ellipse cx="1262.8" cy="605.8" rx="9" ry="8.6" fill="#2c4650" filter="url(#b1)"/>
  <ellipse cx="1262.5" cy="606.3" rx="6.5" ry="6.2" fill="#101c22" filter="url(#b1)"/>
  <ellipse cx="1259" cy="601.5" rx="2.2" ry="1.6" fill="#6f8a92" opacity=".8"/>
  <path d="M1246,592 Q1262,583 1282,592" stroke="#5a6e62" stroke-width="1.6" fill="none" opacity=".8" filter="url(#b1)"/>
  <ellipse cx="1336" cy="597" rx="13" ry="9" fill="#d6dfdb" opacity=".8" filter="url(#b4)"/>
  <path d="M1346,606 Q1349,616 1345,628" stroke="#35524e" stroke-width="3" fill="none" opacity=".8" filter="url(#b1)"/>
 </g>
 <path d="M815.0,503.0C817.2,504.2 820.7,504.5 828.0,510.0C835.3,515.5 846.0,525.9 859.0,536.0C872.0,546.1 890.8,560.9 906.0,570.6C921.2,580.3 936.0,587.8 950.0,594.0C964.0,600.2 974.5,603.7 990.0,608.0C1005.5,612.3 1024.7,616.7 1043.0,620.0C1061.3,623.3 1082.2,626.0 1100.0,628.0C1117.8,630.0 1136.7,631.0 1150.0,632.0C1163.3,633.0 1175.0,633.7 1180.0,634.0" stroke="#5f8076" stroke-width="1.2" fill="none" opacity=".7"/>
 <path d="M1170,640 L1240,648 L1300,640 L1350,626 L1380,618 L1368,645 L1340,670 L1260,705 L1180,700 L1150,670Z" fill="#8fd3c1" opacity=".6" filter="url(#b8)"/>
 <path d="M1110.0,640.0C1121.7,640.5 1158.3,641.3 1180.0,643.0C1201.7,644.7 1221.7,649.8 1240.0,650.0C1258.3,650.2 1273.3,647.5 1290.0,644.0C1306.7,640.5 1331.7,631.5 1340.0,629.0" stroke="#a3dccc" stroke-width="5" fill="none" opacity=".6" filter="url(#b2)"/>
 <path d="M1125,694 L1180,674 L1250,653 L1300,641 L1345,627 L1342,640 L1295,664 L1240,688 L1190,704 L1140,712Z" fill="#48917f" opacity=".42" filter="url(#b5)"/>
 <path d="M1130.0,700.0C1138.3,696.7 1159.9,687.5 1180.0,680.0C1200.1,672.5 1230.8,661.7 1250.8,655.0C1270.8,648.3 1284.3,645.2 1300.0,640.0C1315.7,634.8 1337.5,626.7 1345.0,624.0" stroke="#3f8676" stroke-width="3" fill="none" opacity=".75" filter="url(#b2)"/>
 <path d="M1152.0,728.0C1160.3,725.3 1185.3,718.0 1202.0,712.0C1218.7,706.0 1237.0,699.0 1252.0,692.0C1267.0,685.0 1277.8,677.7 1292.0,670.0C1306.2,662.3 1329.5,650.0 1337.0,646.0" stroke="#9bdccb" stroke-width="6" fill="none" opacity=".6" filter="url(#b4)"/>
 <path d="M1150.0,725.0C1158.3,722.8 1183.3,717.3 1200.0,712.0C1216.7,706.7 1235.0,699.7 1250.0,693.0C1265.0,686.3 1283.3,675.5 1290.0,672.0" stroke="#56a090" stroke-width="2.5" fill="none" opacity=".7" filter="url(#b2)"/>
 <path d="M1228,705 L1248,697" stroke="#2f6f62" stroke-width="3" fill="none" opacity=".8" filter="url(#b1)"/>
 <path d="M915,737 L1080,686" stroke="#9adccb" stroke-width="4" fill="none" opacity=".35" filter="url(#b2)"/>
 <path d="M1346,622 Q1362,624 1377,618" stroke="#5b8a84" stroke-width="1.5" fill="none"/>
 <g stroke="#3f8878" stroke-width="3" opacity=".55" filter="url(#b1)" stroke-linecap="round"><path d="M914,735 l7,5"/><path d="M951,727 l8,6"/><path d="M988,719 l9,7"/><path d="M1030,708 l10,8"/><path d="M1072,694 l10,9"/></g>
</g></g>
</svg>
</div>
<div class="a" id="vs"></div><div class="a" id="vst"></div>
<div class="a" id="status"></div><div class="a" id="zoomb"></div><div class="a" id="docb"></div><div class="a" id="hst"></div><div class="a" style="left:1538px;top:1008px;width:19px;height:19px;background:#535353"></div>
<div class="a" id="rdiv"></div>
<div class="a" id="rtop"></div><div class="a" id="rline"></div><div class="a" id="rtabs"></div><div class="a" id="rtab"></div>
<div class="a" id="rbody"></div><div class="a" id="redge"></div><div class="a" style="left:1916px;top:79px;width:4px;height:51px;background:#4b4b4b"></div><div class="a" style="left:1914px;top:36px;width:1px;height:41px;background:#4a4a4a"></div>
<div class="a" id="psb"></div><div class="a" id="psbt"></div>
<div class="fs"></div><div class="fsl"></div>
<!-- view thumbnail -->
<div class="a" style="left:1634px;top:185px;width:48px;height:48px;border:1px solid #606060;background:#535353"></div>
<div class="a" style="left:1682px;top:185px;width:15px;height:48px;border:1px solid #606060;border-left:none;background:#454545"></div>
<div class="a" style="left:1636px;top:194px;width:43px;height:28px;overflow:hidden;background-color:#fff;background-image:conic-gradient(#ccc 25%,#fff 0 50%,#ccc 0 75%,#fff 0);background-size:10px 10px;background-position:0 0"><svg style="left:0;top:0" width="43" height="28" viewBox="0 0 43 28"><path d="M4.5,10.5 L9,7 L16,9.5 L15.5,5.5 L19.5,9.5 L21,11.5 L27,14.5 L20,17.6 L8,17 L2,15.5 L5,13Z" fill="#b9d8cb"/><path d="M5.2,12.5 L12,11 L21.5,12 L27,14.6 L20,17.8 L8,17.2 L5,15.6Z" fill="#14443f"/><path d="M15.2,5.4 L16.6,5.6 L19.8,10 L16.2,10Z" fill="#1e3a38"/><path d="M1.5,14.5 L5,13.2 L5,16 L2.5,16.2Z" fill="#6f9a92"/></svg></div>
<!-- checkboxes -->
<div class="cb" style="left:206px;top:51px"></div>
<div class="cb" style="left:1728.5px;top:171.5px;border-color:#626262;background:#505050"></div>
<div class="cb" style="left:1728.5px;top:202px"></div>
<div class="cb" style="left:1728.5px;top:233px"></div>
<!-- inputs -->
<div class="inp" style="left:1813px;top:272px;width:62px"></div>
<div class="inp" style="left:1800px;top:532px;width:64px"></div>
<div class="inp" style="left:1800px;top:602px;width:64px"></div>
<div class="inp" style="left:1800px;top:672px;width:64px"></div>
<div class="inp" style="left:1800px;top:742px;width:64px"></div>
<!-- slider tracks -->
<div class="trk" style="left:1583px;top:300px;width:294px"></div>
<div class="trk" style="left:1596px;top:560px;width:269px"></div>
<div class="trk" style="left:1596px;top:630px;width:269px"></div>
<div class="trk" style="left:1596px;top:700px;width:269px"></div>
<div class="trk" style="left:1596px;top:770px;width:269px"></div>
<!-- buttons -->
<div class="btn" style="left:1619px;top:800px;width:130px"></div>
<div class="btn" style="left:1771px;top:800px;width:70px"></div>
<div class="pill" style="left:1735px;top:977px;width:76px;border:2px solid #d8d8d8"></div>
<div class="pill" style="left:1824px;top:977px;width:75px;border:1px solid #8e8e8e"></div>
<!-- remember settings (clipped) -->
<div class="a" style="left:1561px;top:940px;width:338px;height:14px;overflow:hidden">
 <div class="cb" style="left:12px;top:7px;background:#ddd;border-color:#ddd"></div>
 <svg style="left:12px;top:7px" width="12" height="12" viewBox="0 0 12 12"><path d="M2.6,5.6 L5,8.4 L9.6,2.6" stroke="#3a3a3a" stroke-width="2" fill="none"/></svg>
 <span class="t" style="left:31px;top:8px;font-size:12px;color:#ddd;letter-spacing:.35px">Remember Settings</span>
</div>
<div class="a" style="left:194px;top:41px;width:1px;height:31px;background:#3f3f3f"></div>
<div class="a" style="left:77px;top:41px;width:1px;height:31px;background:#3f3f3f"></div>
<div class="a" style="left:121px;top:42px;width:29px;height:30px;background:#383838"></div>
<div class="a" style="left:5px;top:214px;width:38px;height:29px;background:#2e2e2e"></div>
<!-- window controls -->
<div class="a" style="left:1787px;top:-1px;width:129px;height:25px;border:1px solid #474747;border-radius:0 0 4px 4px"></div>
<div class="a" style="left:1822px;top:0;width:1px;height:23px;background:#474747"></div>
<div class="a" style="left:1858px;top:0;width:1px;height:23px;background:#474747"></div>
<span class="t" style="left:58.4px;top:8.9px;font-size:15px;color:#e6e6e6;letter-spacing:-0.56px;">File</span>
<span class="t" style="left:99.4px;top:8.9px;font-size:15px;color:#e6e6e6;letter-spacing:-0.02px;">Edit</span>
<span class="t" style="left:143.4px;top:8.9px;font-size:15px;color:#e6e6e6;letter-spacing:-0.15px;">Image</span>
<span class="t" style="left:202.5px;top:8.9px;font-size:15px;color:#e6e6e6;letter-spacing:-0.78px;">Layer</span>
<span class="t" style="left:254.8px;top:8.9px;font-size:15px;color:#e6e6e6;letter-spacing:-0.14px;">Type</span>
<span class="t" style="left:305.3px;top:8.9px;font-size:15px;color:#e6e6e6;letter-spacing:-0.40px;">Select</span>
<span class="t" style="left:363.3px;top:8.9px;font-size:15px;color:#e6e6e6;letter-spacing:-0.07px;">Filter</span>
<span class="t" style="left:414.7px;top:8.9px;font-size:15px;color:#e6e6e6;letter-spacing:-1.37px;">3D</span>
<span class="t" style="left:452.0px;top:8.9px;font-size:15px;color:#e6e6e6;letter-spacing:-0.15px;">View</span>
<span class="t" style="left:500.5px;top:8.9px;font-size:15px;color:#e6e6e6;letter-spacing:0.39px;">Window</span>
<span class="t" style="left:573.3px;top:8.9px;font-size:15px;color:#e6e6e6;letter-spacing:0.18px;">Help</span>
<span class="t" style="left:224.6px;top:51.2px;font-size:12px;color:#e6e6e6;letter-spacing:0.12px;">Sample All Layers</span>
<span class="t" style="left:64.6px;top:91.8px;font-size:13px;color:#a6a6a6;letter-spacing:0.63px;font-weight:bold;">Manta Ray.jpg @ 28.7% (Layer 2, RGB/8) *</span>
<span class="t" style="left:386.8px;top:91.8px;font-size:13px;color:#a6a6a6;letter-spacing:0.58px;font-weight:bold;">Water Drone Shot.jpg @ 26.6% (Layer 2, RGB/8) *</span>
<span class="t" style="left:753.3px;top:91.8px;font-size:13px;color:#efefef;letter-spacing:0.59px;font-weight:bold;">Side Manta Ray.jpg @ 30.9% (Layer 1, RGB/8) *</span>
<span class="t" style="left:62.1px;top:1012.0px;font-size:12px;color:#e6e6e6;letter-spacing:0.59px;">30.9%</span>
<span class="t" style="left:169.5px;top:1013.8px;font-size:12px;color:#ccc;letter-spacing:-0.10px;">Doc: 68.7M/94.2M</span>
<span class="t" style="left:1573.4px;top:105.7px;font-size:13px;color:#f0f0f0;letter-spacing:-0.73px;font-weight:bold;">Properties</span>
<span class="t" style="left:1600.8px;top:145.2px;font-size:12px;color:#e6e6e6;letter-spacing:0.04px;">View Mode</span>
<span class="t" style="left:1593.2px;top:202.7px;font-size:12px;color:#e6e6e6;letter-spacing:0.12px;">View:</span>
<span class="t" style="left:1747.1px;top:173.1px;font-size:12px;color:#7d7d7d;letter-spacing:0.13px;">Show Edge (J)</span>
<span class="t" style="left:1747.1px;top:204.0px;font-size:12px;color:#e6e6e6;letter-spacing:0.22px;">Show Original (P)</span>
<span class="t" style="left:1747.1px;top:234.8px;font-size:12px;color:#e6e6e6;letter-spacing:0.19px;">High Quality Preview</span>
<span class="t" style="left:1575.4px;top:275.4px;font-size:12px;color:#e6e6e6;letter-spacing:0.20px;">Transparency:</span>
<span class="t" style="left:1820.5px;top:276.8px;font-size:12px;color:#e6e6e6;letter-spacing:0.67px;">100%</span>
<span class="t" style="left:1599.0px;top:395.3px;font-size:13px;color:#dcdcdc;letter-spacing:-0.23px;font-weight:bold;">Edge Detection</span>
<span class="t" style="left:1599.0px;top:469.0px;font-size:13px;color:#dcdcdc;letter-spacing:-0.11px;font-weight:bold;">Global Refinements</span>
<span class="t" style="left:1588.1px;top:536.8px;font-size:12px;color:#e6e6e6;letter-spacing:0.37px;">Smooth:</span>
<span class="t" style="left:1806.3px;top:536.8px;font-size:12px;color:#e6e6e6;letter-spacing:0.00px;">0</span>
<span class="t" style="left:1588.1px;top:606.4px;font-size:12px;color:#e6e6e6;letter-spacing:0.20px;">Feather:</span>
<span class="t" style="left:1805.8px;top:606.8px;font-size:12px;color:#e6e6e6;letter-spacing:0.56px;">7.1 px</span>
<span class="t" style="left:1588.1px;top:676.8px;font-size:12px;color:#e6e6e6;letter-spacing:0.15px;">Contrast:</span>
<span class="t" style="left:1806.0px;top:676.8px;font-size:12px;color:#e6e6e6;letter-spacing:0.99px;">28%</span>
<span class="t" style="left:1588.1px;top:746.8px;font-size:12px;color:#e6e6e6;letter-spacing:0.21px;">Shift Edge:</span>
<span class="t" style="left:1806.0px;top:746.8px;font-size:12px;color:#e6e6e6;letter-spacing:0.56px;">-19%</span>
<span class="t" style="left:1635.0px;top:803.3px;font-size:15px;color:#e6e6e6;letter-spacing:-0.34px;">Clear Selection</span>
<span class="t" style="left:1786.0px;top:803.3px;font-size:15px;color:#e6e6e6;letter-spacing:0.50px;">Invert</span>
<span class="t" style="left:1599.0px;top:887.4px;font-size:13px;color:#dcdcdc;letter-spacing:0.07px;font-weight:bold;">Output Settings</span>
<span class="t" style="left:1762.2px;top:986.1px;font-size:15px;color:#f0f0f0;letter-spacing:-1.87px;">OK</span>
<span class="t" style="left:1839.0px;top:986.1px;font-size:15px;color:#f0f0f0;letter-spacing:-0.62px;">Cancel</span>
<svg style="left:0;top:0" width="1920" height="1027" viewBox="0 0 1920 1027"><rect x="12.9" y="6.9" width="18.4" height="18.1" fill="#001c33" stroke="#35a7dc" stroke-width="1.9"/>
<text x="16.7" y="19.9" font-family="Liberation Sans, sans-serif" font-size="12.6" fill="#42b4da" textLength="11.3" lengthAdjust="spacingAndGlyphs">Ps</text>
<path d="M28.1,50.6 L39.6,54.8 L46.5,48.5 L47.0,59.1 L37.1,63.9 M28.1,50.6 L34.3,60.3 M34.1,63.1 L29.4,65.5 M36.1,63.8 L34.1,68.2" stroke="#9c9c9c" stroke-width="1.5" fill="none" stroke-linejoin="miter"/><circle cx="35.5" cy="61.9" r="1.9" stroke="#9c9c9c" stroke-width="1.27" fill="none"/>
<path d="M58.95,57.5 L62.2,61.099999999999994 L65.45,57.5" stroke="#6c6c6c" stroke-width="1.4" fill="none"/>
<path d="M4.5,41 V75" stroke="#474747" stroke-width="3" stroke-dasharray="1 1"/>
<rect x="93" y="48" width="13" height="13" fill="#e2e2e2"/><rect x="98.7" y="53" width="12.5" height="12.6" fill="#e2e2e2" stroke="#535353" stroke-width="0"/>
<rect x="127" y="49" width="11.7" height="11.6" fill="#e2e2e2"/><rect x="131.9" y="54.4" width="10.3" height="9.8" fill="#383838" stroke="#e2e2e2" stroke-width="1.4"/>
<rect x="159.7" y="50" width="10.3" height="10" fill="none" stroke="#e2e2e2" stroke-width="1.4"/><rect x="163.7" y="54.4" width="10.3" height="9.8" fill="none" stroke="#e2e2e2" stroke-width="1.4"/><rect x="163.7" y="54.4" width="6.3" height="5.6" fill="#d0d0d0"/>
<path d="M350.59999999999997,93.2 L357.8,100.39999999999999 M357.8,93.2 L350.59999999999997,100.39999999999999" stroke="#c8c8c8" stroke-width="1.7"/>
<path d="M717.4,93.2 L724.6,100.39999999999999 M724.6,93.2 L717.4,100.39999999999999" stroke="#c8c8c8" stroke-width="1.7"/>
<path d="M1070.4,93.2 L1077.6,100.39999999999999 M1077.6,93.2 L1070.4,100.39999999999999" stroke="#e6e6e6" stroke-width="1.7"/>
<path d="M9.5,83.8 l2.6,2.2 l-2.6,2.2Z M13.1,83.8 l2.6,2.2 l-2.6,2.2Z" fill="#d0d0d0"/>
<path d="M10,101.5 H38" stroke="#444" stroke-width="3.5" stroke-dasharray="1.5 1.5"/>
<circle cx="19.6" cy="129.6" r="6.8" fill="none" stroke="#e2e2e2" stroke-width="1.5" stroke-dasharray="1.3 1.6"/>
<circle cx="23.3" cy="135.5" r="5.2" fill="#535353"/>
<g transform="translate(0,0)" fill="#e2e2e2"><path d="M35.2,120.8 L36.8,122.2 L30.4,131.9 L27,129.5Z"/><path d="M27.4,130.9 C29,133 27.5,136.5 24,138 C22,138.9 20,138.6 18.8,139.6 C19.6,137.6 19.5,135.5 21,133.6 C22.8,131.2 25.6,129.8 27.4,130.9Z"/></g>
<path d="M21.5,157.5 C15,159 10.5,164 11.2,169.5 C11.8,174 17,176.5 22.5,174.8 C18,174.5 14.8,172 14.6,168 C14.3,163.5 17,159.8 21.5,157.5Z" fill="#e2e2e2"/>
<path d="M23,159.5 C19,161.5 16.8,165 17.5,169 C18.5,165 20.2,162 23,159.5Z M24.2,162 C21.5,164 20.2,166.5 20.6,169.5 C21.3,166.6 22.4,164.3 24.2,162Z" fill="#e2e2e2"/>
<path d="M18,171.8 C20,173.4 23.5,173.4 26,171.2" stroke="#e2e2e2" stroke-width="1.3" fill="none"/>
<circle cx="23.6" cy="167.6" r="5" fill="#535353"/>
<g transform="translate(0.3,32)" fill="#e2e2e2"><path d="M35.2,120.8 L36.8,122.2 L30.4,131.9 L27,129.5Z"/><path d="M27.4,130.9 C29,133 27.5,136.5 24,138 C22,138.9 20,138.6 18.8,139.6 C19.6,137.6 19.5,135.5 21,133.6 C22.8,131.2 25.6,129.8 27.4,130.9Z"/></g>
<circle cx="17.6" cy="193.4" r="7.8" fill="#8b8b8b"/>
<circle cx="23" cy="199.4" r="5.3" fill="#535353"/>
<g transform="translate(0,63.8)" fill="#e2e2e2"><path d="M35.2,120.8 L36.8,122.2 L30.4,131.9 L27,129.5Z"/><path d="M27.4,130.9 C29,133 27.5,136.5 24,138 C22,138.9 20,138.6 18.8,139.6 C19.6,137.6 19.5,135.5 21,133.6 C22.8,131.2 25.6,129.8 27.4,130.9Z"/></g>
<path d="M14.5,220.5 L26.2,224.8 L33.2,218.4 L33.7,229.1 L23.6,234.0 M14.5,220.5 L20.8,230.3 M20.6,233.2 L15.8,235.6 M22.6,233.9 L20.6,238.4" stroke="#e6e6e6" stroke-width="1.5" fill="none" stroke-linejoin="miter"/><circle cx="22.0" cy="232.0" r="1.9" stroke="#e6e6e6" stroke-width="1.27" fill="none"/>
<path d="M40.2,236.4 V239.9 H36.6Z" fill="#d0d0d0"/>
<path d="M19.2,262 L16,258.6 C15,257.6 16.3,256 17.6,257 L20.8,259.8 L20.6,253.5 C20.6,252 22.6,252 22.7,253.5 L23.2,258 L23.6,252 C23.7,250.5 25.7,250.5 25.7,252 L25.9,258 L26.8,252.8 C27,251.4 29,251.6 28.9,253 L28.5,258.6 L29.9,255.4 C30.5,254.2 32.2,254.8 31.9,256.2 L30.8,262.5 C30.2,266.5 28.5,269.6 25,269.6 C22,269.6 20.6,267 19.2,262Z" fill="#e2e2e2"/>
<circle cx="20.9" cy="291.2" r="6.6" fill="none" stroke="#e6e6e6" stroke-width="1.7"/><path d="M25.8,296 L33,302.8" stroke="#e6e6e6" stroke-width="2.4" stroke-linecap="round"/><path d="M20.4,287.2 A4,4 0 0 1 24.6,290" stroke="#e6e6e6" stroke-width="1.1" fill="none"/>
<rect x="1799" y="13" width="13" height="3.8" fill="#b4b4b4"/>
<rect x="1838.5" y="6" width="11" height="9" fill="none" stroke="#b4b4b4" stroke-width="2.4"/><rect x="1833.2" y="10.2" width="11" height="8.6" fill="#535353" stroke="#b4b4b4" stroke-width="2.4"/>
<path d="M1882.5,7.199999999999999 L1892.5,17.2 M1892.5,7.199999999999999 L1882.5,17.2" stroke="#b4b4b4" stroke-width="3"/>
<circle cx="1805.6" cy="55.6" r="6.6" fill="none" stroke="#c2c2c2" stroke-width="1.6"/><path d="M1801.2,60.6 L1796,65.6" stroke="#c2c2c2" stroke-width="2.2" stroke-linecap="round"/>
<rect x="1830.8" y="51" width="19.6" height="15.2" fill="none" stroke="#dcdcdc" stroke-width="1.6"/><path d="M1830.8,52 H1850.4" stroke="#dcdcdc" stroke-width="1.6"/><rect x="1833.2" y="54.5" width="3.6" height="8.6" fill="none" stroke="#dcdcdc" stroke-width="1.1"/><path d="M1833.2,58.8 H1836.8" stroke="#dcdcdc" stroke-width="1"/>
<path d="M1864.0,56.7 L1867.7,60.5 L1871.4,56.7" stroke="#bdbdbd" stroke-width="1.3" fill="none"/>
<path d="M1893.5,55.6 H1888.9 V65.8 H1906.1 V55.6 H1901.5" fill="none" stroke="#a8a8a8" stroke-width="1.4"/><path d="M1897.5,60 V47.2 M1893.8,50.8 L1897.5,46.8 L1901.2,50.8" fill="none" stroke="#a8a8a8" stroke-width="1.4"/>
<path d="M1545.1,129.9 L1548.8,126.1 L1552.5,129.9" stroke="#8e8e8e" stroke-width="1.1" fill="none"/>
<path d="M1545.1,993.5 L1548.8,997.3 L1552.5,993.5" stroke="#8e8e8e" stroke-width="1.1" fill="none"/>
<path d="M1523.1,1015.5 L1526.5,1019 L1523.1,1022.5" stroke="#8a8a8a" stroke-width="1.1" fill="none"/>
<path d="M355.5,1015.5 L352.1,1019 L355.5,1022.5" stroke="#7e7e7e" stroke-width="1.1" fill="none"/>
<path d="M329.2,1013.5 L332.8,1018 L329.2,1022.5" stroke="#d0d0d0" stroke-width="1.3" fill="none"/>
<path d="M1904.2,83.8 l2.6,2.2 l-2.6,2.2Z M1907.8,83.8 l2.6,2.2 l-2.6,2.2Z" fill="#d0d0d0"/>
<path d="M1906.5,145.20000000000002 L1910.2,141.4 L1913.9,145.20000000000002" stroke="#9a9a9a" stroke-width="1.2" fill="none"/>
<path d="M1906.5,941.3000000000001 L1910.2,945.1 L1913.9,941.3000000000001" stroke="#9a9a9a" stroke-width="1.2" fill="none"/>
<path d="M1685.8,209.1 L1689.6,212.9 L1693.3999999999999,209.1" stroke="#d4d4d4" stroke-width="1.1" fill="none"/>
<path d="M1576.2,397.4 L1579.8,402.4 L1576.2,407.4" stroke="#cfcfcf" stroke-width="1.2" fill="none"/>
<path d="M1576.2,889.0 L1579.8,894 L1576.2,899.0" stroke="#cfcfcf" stroke-width="1.2" fill="none"/>
<path d="M1574.5,472.7 L1579.3,477.3 L1584.1,472.7" stroke="#cfcfcf" stroke-width="1.2" fill="none"/>
<path d="M1877.2,297.59999999999997 L1883.3,305.4 L1882.8,308.99999999999994 Q1882.6000000000001,310.2 1881.4,310.2 L1873.0,310.2 Q1871.8,310.2 1871.6000000000001,308.99999999999994 L1871.1000000000001,305.4Z" fill="#f4f4f4" stroke="#3c3c3c" stroke-width="0.9" stroke-linejoin="round"/>
<path d="M1595,557.6 L1601.1,565.4 L1600.6,569.0 Q1600.4,570.2 1599.2,570.2 L1590.8,570.2 Q1589.6,570.2 1589.4,569.0 L1588.9,565.4Z" fill="#f4f4f4" stroke="#3c3c3c" stroke-width="0.9" stroke-linejoin="round"/>
<path d="M1682.5,627.6 L1688.6,635.4 L1688.1,639.0 Q1687.9,640.2 1686.7,640.2 L1678.3,640.2 Q1677.1,640.2 1676.9,639.0 L1676.4,635.4Z" fill="#f4f4f4" stroke="#3c3c3c" stroke-width="0.9" stroke-linejoin="round"/>
<path d="M1669.9,697.6 L1676.0,705.4 L1675.5,709.0 Q1675.3000000000002,710.2 1674.1000000000001,710.2 L1665.7,710.2 Q1664.5,710.2 1664.3000000000002,709.0 L1663.8000000000002,705.4Z" fill="#f4f4f4" stroke="#3c3c3c" stroke-width="0.9" stroke-linejoin="round"/>
<path d="M1704,767.6 L1710.1,775.4 L1709.6,779.0 Q1709.4,780.2 1708.2,780.2 L1699.8,780.2 Q1698.6,780.2 1698.4,779.0 L1697.9,775.4Z" fill="#f4f4f4" stroke="#3c3c3c" stroke-width="0.9" stroke-linejoin="round"/>
<path d="M1591.2,990.8 A7.6,7.6 0 1 1 1598.5,1001" fill="none" stroke="#e6e6e6" stroke-width="2"/><path d="M1585.6,991.2 L1596.2,991.2 L1591,997.6Z" fill="#e6e6e6"/><path d="M1585.6,1002.2 H1607" stroke="#e6e6e6" stroke-width="1.5"/></svg>
</body></html>
